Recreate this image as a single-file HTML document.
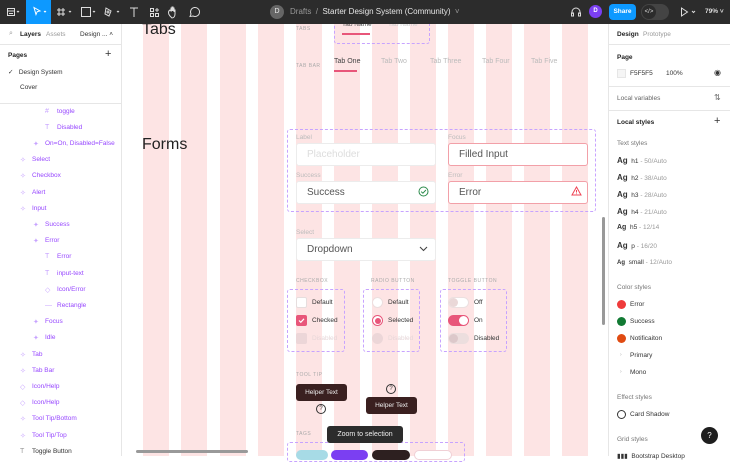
<!DOCTYPE html>
<html><head><meta charset="utf-8"><style>
*{margin:0;padding:0;box-sizing:border-box}
body{width:730px;height:456px;overflow:hidden;font-family:"Liberation Sans",sans-serif;background:#fff;position:relative;font-size:7px;color:#333}
.a{position:absolute}
.top{left:0;top:0;width:730px;height:24px;background:#2c2c2c;color:#ddd}
.stripe{position:absolute;top:24px;height:432px;width:26px;background:#fde4e4}
.lp{left:0;top:24px;width:122px;height:432px;background:#fff;border-right:1px solid #e6e6e6}
.rp{left:608px;top:24px;width:122px;height:432px;background:#fff;border-left:1px solid #e6e6e6}
.ly{position:absolute;color:#9747ff;font-size:6.5px}
.ly i{position:absolute;left:-12px;top:0;font-style:normal;color:#c7a3ff;font-size:7px}
.dash{position:absolute;border:1px dashed #c7a3ff;border-radius:3px}
.inp{position:absolute;border:1px solid #ececec;border-radius:3px;font-size:10px;padding-left:10px;display:flex;align-items:center;color:#555;background:#fff}
.lbl{position:absolute;font-size:6.5px;color:#bbb}
.cap{position:absolute;font-size:5px;color:#aaa;letter-spacing:.5px}
.rt{position:absolute;font-size:6.5px;color:#333}
.sm{color:#999}
.tip{position:absolute;background:#3a2020;color:#eee;border-radius:3px;font-size:6.5px;display:flex;align-items:center;justify-content:center}
</style></head><body>
<div class="stripe" style="left:143px"></div><div class="stripe" style="left:181px"></div><div class="stripe" style="left:220px"></div><div class="stripe" style="left:258px"></div><div class="stripe" style="left:296px"></div><div class="stripe" style="left:334px"></div><div class="stripe" style="left:372px"></div><div class="stripe" style="left:410px"></div><div class="stripe" style="left:448px"></div><div class="stripe" style="left:486px"></div><div class="stripe" style="left:524px"></div><div class="stripe" style="left:562px"></div>

<div class="a" style="left:142px;top:21px;font-size:16px;color:#222">Tabs</div>
<div class="a" style="left:142px;top:136px;font-size:16px;color:#222">Forms</div>
<div class="cap" style="left:296px;top:26px">TABS</div>
<div class="dash" style="left:334px;top:20px;width:96px;height:24px;border-top:none"></div>
<div class="a" style="left:342px;top:21px;font-size:6.5px;color:#555">Tab Name</div>
<div class="a" style="left:388px;top:21px;font-size:6.5px;color:#ccc">Tab Name</div>
<div class="a" style="left:342px;top:33px;width:28px;height:2px;background:#e8567a"></div>
<div class="cap" style="left:296px;top:63px">TAB BAR</div>
<div class="a" style="left:334px;top:58px;font-size:7px;color:#444">Tab One</div>
<div class="a" style="left:381px;top:58px;font-size:7px;color:#bbb">Tab Two</div>
<div class="a" style="left:430px;top:58px;font-size:7px;color:#bbb">Tab Three</div>
<div class="a" style="left:482px;top:58px;font-size:7px;color:#bbb">Tab Four</div>
<div class="a" style="left:531px;top:58px;font-size:7px;color:#bbb">Tab Five</div>
<div class="a" style="left:334px;top:70px;width:23px;height:2px;background:#e8567a"></div>

<div class="dash" style="left:287px;top:129px;width:309px;height:83px"></div>
<div class="lbl" style="left:296px;top:134px">Label</div>
<div class="inp" style="left:296px;top:143px;width:140px;height:23px;color:#ddd">Placeholder</div>
<div class="lbl" style="left:296px;top:172px">Success</div>
<div class="inp" style="left:296px;top:181px;width:140px;height:23px">Success</div>
<svg class="a" style="left:418px;top:186px" width="11" height="11" viewBox="0 0 11 11"><circle cx="5.5" cy="5.5" r="4.5" fill="none" stroke="#2a8a4a" stroke-width="1"/><path d="M3.2 5.6l1.7 1.6 3-3.2" fill="none" stroke="#2a8a4a" stroke-width="1"/></svg>
<div class="lbl" style="left:448px;top:134px">Focus</div>
<div class="inp" style="left:448px;top:143px;width:140px;height:23px;border-color:#f2a0a8">Filled Input</div>
<div class="lbl" style="left:448px;top:172px">Error</div>
<div class="inp" style="left:448px;top:181px;width:140px;height:23px;border-color:#f2a0a8">Error</div>
<svg class="a" style="left:571px;top:186px" width="11" height="10" viewBox="0 0 11 10"><path d="M5.5 1L10 9H1z" fill="none" stroke="#ef4455" stroke-width="1"/><path d="M5.5 4v2.5M5.5 7.5v.6" stroke="#ef4455" stroke-width="1"/></svg>

<div class="lbl" style="left:296px;top:229px">Select</div>
<div class="inp" style="left:296px;top:238px;width:140px;height:23px">Dropdown</div>
<svg class="a" style="left:419px;top:246px" width="9" height="6" viewBox="0 0 9 6"><path d="M1 1l3.5 3.5L8 1" fill="none" stroke="#444" stroke-width="1.1"/></svg>

<div class="cap" style="left:296px;top:278px">CHECKBOX</div>
<div class="cap" style="left:371px;top:278px">RADIO BUTTON</div>
<div class="cap" style="left:448px;top:278px">TOGGLE BUTTON</div>
<div class="dash" style="left:287px;top:289px;width:58px;height:63px"></div>
<div class="dash" style="left:363px;top:289px;width:57px;height:63px"></div>
<div class="dash" style="left:440px;top:289px;width:67px;height:63px"></div>
<div class="a" style="left:296px;top:297px;width:11px;height:11px;border:1px solid #e6dede;border-radius:2px;background:#fff"></div>
<div class="a" style="left:296px;top:315px;width:11px;height:11px;border-radius:2px;background:#e8567a"></div>
<svg class="a" style="left:297px;top:316px" width="9" height="9" viewBox="0 0 9 9"><path d="M2 4.5l1.8 1.8L7 2.8" fill="none" stroke="#fff" stroke-width="1.2"/></svg>
<div class="a" style="left:296px;top:333px;width:11px;height:11px;border-radius:2px;background:#ecd6d8"></div>
<div class="rt" style="left:312px;top:299px">Default</div>
<div class="rt" style="left:312px;top:317px">Checked</div>
<div class="rt" style="left:312px;top:335px;color:#e6d6d8">Disabled</div>
<div class="a" style="left:372px;top:297px;width:11px;height:11px;border:1px solid #ecdede;border-radius:50%;background:#fff"></div>
<div class="a" style="left:372px;top:315px;width:11px;height:11px;border:1px solid #e8567a;border-radius:50%;background:#fff"></div>
<div class="a" style="left:374.5px;top:317.5px;width:6px;height:6px;border-radius:50%;background:#e8567a"></div>
<div class="a" style="left:372px;top:333px;width:11px;height:11px;border-radius:50%;background:#ecd6d8"></div>
<div class="rt" style="left:388px;top:299px">Default</div>
<div class="rt" style="left:388px;top:317px">Selected</div>
<div class="rt" style="left:388px;top:335px;color:#e6d6d8">Disabled</div>
<div class="a" style="left:448px;top:297px;width:21px;height:11px;border:1px solid #ece0e0;border-radius:6px;background:#fff"></div>
<div class="a" style="left:449px;top:298px;width:9px;height:9px;border-radius:50%;background:#ead8d8"></div>
<div class="a" style="left:448px;top:315px;width:21px;height:11px;border-radius:6px;background:#e8567a"></div>
<div class="a" style="left:459px;top:316px;width:9px;height:9px;border-radius:50%;background:#fff"></div>
<div class="a" style="left:448px;top:333px;width:21px;height:11px;border-radius:6px;background:#ecdede"></div>
<div class="a" style="left:449px;top:334px;width:9px;height:9px;border-radius:50%;background:#dcc8ca"></div>
<div class="rt" style="left:474px;top:299px">Off</div>
<div class="rt" style="left:474px;top:317px">On</div>
<div class="rt" style="left:474px;top:335px">Disabled</div>

<div class="cap" style="left:296px;top:372px">TOOL TIP</div>
<div class="tip" style="left:296px;top:384px;width:51px;height:17px">Helper Text</div>
<div class="a" style="left:316px;top:404px;width:10px;height:10px;border:1px solid #333;border-radius:50%;font-size:6px;text-align:center;line-height:8px;color:#333">?</div>
<div class="a" style="left:386px;top:384px;width:10px;height:10px;border:1px solid #333;border-radius:50%;font-size:6px;text-align:center;line-height:8px;color:#333">?</div>
<div class="tip" style="left:366px;top:397px;width:51px;height:17px">Helper Text</div>
<div class="cap" style="left:296px;top:431px">TAGS</div>
<div class="dash" style="left:287px;top:442px;width:178px;height:20px"></div>
<div class="a" style="left:296px;top:450px;width:32px;height:10px;border-radius:5px;background:#a7dbe6"></div>
<div class="a" style="left:331px;top:450px;width:37px;height:10px;border-radius:5px;background:#7b3ff2"></div>
<div class="a" style="left:372px;top:450px;width:38px;height:10px;border-radius:5px;background:#2d2020"></div>
<div class="a" style="left:414px;top:450px;width:38px;height:10px;border-radius:5px;border:1px solid #f0d0d6;background:#fff"></div>
<div class="a" style="left:327px;top:426px;width:76px;height:17px;background:#2c2c2c;color:#eee;border-radius:3px;font-size:7px;display:flex;align-items:center;justify-content:center">Zoom to selection</div>
<div class="a" style="left:136px;top:450px;width:112px;height:3px;background:#999;border-radius:2px"></div>
<div class="a" style="left:602px;top:217px;width:3px;height:108px;background:#999;border-radius:2px"></div>

<div class="a top">
 <div class="a" style="left:26px;top:0;width:25px;height:24px;background:#0d99ff"></div>
 <svg class="a" style="left:0;top:0" width="210" height="24" viewBox="0 0 210 24" fill="none" stroke="#ddd" stroke-width="1">
  <rect x="7.5" y="8.5" width="7" height="7"/><path d="M7.5 11h7M9 13.5h4"/><path d="M17 11l1 1 1-1"/>
  <path d="M34 7.5l6 3.5-2.8.7-1.2 2.8z" stroke="#fff"/><path d="M44 11l1 1 1-1" stroke="#fff"/>
  <path d="M59 8v8M63 8v8M57 10h8M57 14h8"/><path d="M69 11l1 1 1-1"/>
  <rect x="81.5" y="7.5" width="9" height="9"/><path d="M93 11l1 1 1-1"/>
  <path d="M106 8l5 3-2 5-4-2z"/><circle cx="108" cy="12" r="1"/><path d="M117 11l1 1 1-1"/>
  <path d="M130 8h8M134 8v9"/>
  <rect x="150.5" y="8.5" width="3" height="3"/><rect x="150.5" y="13.5" width="3" height="3"/><rect x="155.5" y="13.5" width="3" height="3"/><path d="M157 8v4M155 10h4"/>
  <path d="M170 16c-2-2-2-5 0-6l1 1V8h1v3-4h1v4-3h1v4-2h1v4c0 2-1 4-3 4z"/>
  <path d="M190 16.5l1-2.5a4.5 4.5 0 1 1 2 2z"/>
 </svg>
 <div class="a" style="left:270px;top:5px;width:14px;height:14px;border-radius:50%;background:#666;color:#eee;font-size:7px;text-align:center;line-height:14px">D</div>
 <div class="a" style="left:290px;top:7px;font-size:8px;color:#999">Drafts&nbsp;&nbsp;/&nbsp;&nbsp;<span style="color:#e6e6e6">Starter Design System (Community)</span>&nbsp;&nbsp;˅</div>
 <svg class="a" style="left:570px;top:6px" width="12" height="12" viewBox="0 0 12 12" fill="none" stroke="#ddd" stroke-width="1"><path d="M2 8V6a4 4 0 0 1 8 0v2"/><rect x="1.5" y="7" width="2" height="3"/><rect x="8.5" y="7" width="2" height="3"/></svg>
 <div class="a" style="left:589px;top:5px;width:13px;height:13px;border-radius:50%;background:#7b3ff2;color:#fff;font-size:6px;text-align:center;line-height:13px;font-weight:bold">D</div>
 <div class="a" style="left:609px;top:4px;width:27px;height:16px;border-radius:4px;background:#0d99ff;color:#fff;font-size:6.5px;font-weight:bold;text-align:center;line-height:16px">Share</div>
 <div class="a" style="left:641px;top:4px;width:28px;height:16px;border-radius:8px;background:#444"></div>
 <div class="a" style="left:642px;top:5px;width:14px;height:14px;border-radius:50%;background:#2c2c2c;color:#ddd;font-size:6px;text-align:center;line-height:14px">&lt;/&gt;</div>
 <svg class="a" style="left:680px;top:7px" width="20" height="10" viewBox="0 0 20 10" fill="none" stroke="#ddd" stroke-width="1"><path d="M1.5 1v8l6-4z"/><path d="M12 4l1.5 1.5L15 4"/></svg>
 <div class="a" style="left:705px;top:8px;font-size:6.5px;color:#ddd;font-weight:bold">79% ˅</div>
</div>

<div class="a lp">
 <div class="a" style="left:9px;top:6px;font-size:7px;color:#999">⌕</div>
 <div class="a" style="left:20px;top:7px;font-size:6.5px;font-weight:bold;color:#222">Layers</div>
 <div class="a" style="left:46px;top:7px;font-size:6.5px;color:#999">Assets</div>
 <div class="a" style="left:80px;top:7px;font-size:6.5px;color:#333">Design ... ˄</div>
 <div class="a" style="left:0;top:20px;width:121px;height:1px;background:#e6e6e6"></div>
 <div class="a" style="left:8px;top:28px;font-size:6.5px;font-weight:bold;color:#222">Pages</div>
 <div class="a" style="left:105px;top:24px;font-size:11px;color:#333">+</div>
 <div class="a" style="left:8px;top:44px;font-size:6.5px;color:#333">✓&nbsp;&nbsp;&nbsp;Design System</div>
 <div class="a" style="left:20px;top:60px;font-size:6.5px;color:#333">Cover</div>
 <div class="a" style="left:0;top:79px;width:121px;height:1px;background:#e6e6e6"></div>
 <div class="ly" style="left:57px;top:84px"><i>#</i>toggle</div>
 <div class="ly" style="left:57px;top:100px"><i>T</i>Disabled</div>
 <div class="ly" style="left:45px;top:116px"><i>✦</i>On=On, Disabled=False</div>
 <div class="ly" style="left:32px;top:132px"><i>✧</i>Select</div>
 <div class="ly" style="left:32px;top:148px"><i>✧</i>Checkbox</div>
 <div class="ly" style="left:32px;top:165px"><i>✧</i>Alert</div>
 <div class="ly" style="left:32px;top:181px"><i>✧</i>Input</div>
 <div class="ly" style="left:45px;top:197px"><i>✦</i>Success</div>
 <div class="ly" style="left:45px;top:213px"><i>✦</i>Error</div>
 <div class="ly" style="left:57px;top:229px"><i>T</i>Error</div>
 <div class="ly" style="left:57px;top:246px"><i>T</i>input-text</div>
 <div class="ly" style="left:57px;top:262px"><i>◇</i>Icon/Error</div>
 <div class="ly" style="left:57px;top:278px"><i>—</i>Rectangle</div>
 <div class="ly" style="left:45px;top:294px"><i>✦</i>Focus</div>
 <div class="ly" style="left:45px;top:310px"><i>✦</i>Idle</div>
 <div class="ly" style="left:32px;top:327px"><i>✧</i>Tab</div>
 <div class="ly" style="left:32px;top:343px"><i>✧</i>Tab Bar</div>
 <div class="ly" style="left:32px;top:359px"><i>◇</i>Icon/Help</div>
 <div class="ly" style="left:32px;top:375px"><i>◇</i>Icon/Help</div>
 <div class="ly" style="left:32px;top:391px"><i>✧</i>Tool Tip/Bottom</div>
 <div class="ly" style="left:32px;top:408px"><i>✧</i>Tool Tip/Top</div>
 <div class="ly" style="left:32px;top:424px;color:#333"><i style="color:#999">T</i>Toggle Button</div>
</div>

<div class="a rp">
 <div class="a" style="left:8px;top:7px;font-size:6.5px;font-weight:bold;color:#222">Design</div>
 <div class="a" style="left:34px;top:7px;font-size:6.5px;color:#999">Prototype</div>
 <div class="a" style="left:0;top:20px;width:122px;height:1px;background:#e6e6e6"></div>
 <div class="a" style="left:8px;top:30px;font-size:6.5px;font-weight:bold;color:#222">Page</div>
 <div class="a" style="left:8px;top:45px;width:9px;height:9px;background:#f5f5f5;border:1px solid #e6e6e6"></div>
 <div class="a" style="left:21px;top:46px;font-size:6.5px;color:#333">F5F5F5</div>
 <div class="a" style="left:57px;top:46px;font-size:6.5px;color:#333">100%</div>
 <div class="a" style="left:105px;top:44px;font-size:8px;color:#333">◉</div>
 <div class="a" style="left:0;top:62px;width:122px;height:1px;background:#e6e6e6"></div>
 <div class="a" style="left:8px;top:71px;font-size:6.5px;color:#666">Local variables</div>
 <div class="a" style="left:105px;top:69px;font-size:8px;color:#666">⇅</div>
 <div class="a" style="left:0;top:86px;width:122px;height:1px;background:#e6e6e6"></div>
 <div class="a" style="left:8px;top:95px;font-size:6.5px;font-weight:bold;color:#222">Local styles</div>
 <div class="a" style="left:105px;top:91px;font-size:11px;color:#333">+</div>
 <div class="a" style="left:8px;top:116px;font-size:6.5px;color:#777">Text styles</div>
 <div class="a" style="left:8px;top:132px;font-size:6.5px;color:#333"><b style="font-size:8px">Ag</b>&nbsp; h1 <span class="sm">- 50/Auto</span></div>
 <div class="a" style="left:8px;top:149px;font-size:6.5px;color:#333"><b style="font-size:8px">Ag</b>&nbsp; h2 <span class="sm">- 38/Auto</span></div>
 <div class="a" style="left:8px;top:166px;font-size:6.5px;color:#333"><b style="font-size:8px">Ag</b>&nbsp; h3 <span class="sm">- 28/Auto</span></div>
 <div class="a" style="left:8px;top:183px;font-size:6.5px;color:#333"><b style="font-size:8px">Ag</b>&nbsp; h4 <span class="sm">- 21/Auto</span></div>
 <div class="a" style="left:8px;top:200px;font-size:6.5px;color:#333"><b style="font-size:7px">Ag</b>&nbsp; h5 <span class="sm">- 12/14</span></div>
 <div class="a" style="left:8px;top:217px;font-size:6.5px;color:#333"><b style="font-size:8px">Ag</b>&nbsp; p <span class="sm">- 16/20</span></div>
 <div class="a" style="left:8px;top:235px;font-size:6.5px;color:#333"><b style="font-size:6px">Ag</b>&nbsp; small <span class="sm">- 12/Auto</span></div>
 <div class="a" style="left:8px;top:260px;font-size:6.5px;color:#777">Color styles</div>
 <div class="a" style="left:8px;top:276px;width:9px;height:9px;border-radius:50%;background:#ef3b3b"></div><div class="rt" style="left:21px;top:277px">Error</div>
 <div class="a" style="left:8px;top:293px;width:9px;height:9px;border-radius:50%;background:#127a34"></div><div class="rt" style="left:21px;top:294px">Success</div>
 <div class="a" style="left:8px;top:310px;width:9px;height:9px;border-radius:50%;background:#e04b12"></div><div class="rt" style="left:21px;top:311px">Notificaiton</div>
 <div class="rt" style="left:11px;top:328px;color:#aaa;font-size:5px">›</div><div class="rt" style="left:21px;top:328px">Primary</div>
 <div class="rt" style="left:11px;top:345px;color:#aaa;font-size:5px">›</div><div class="rt" style="left:21px;top:345px">Mono</div>
 <div class="a" style="left:8px;top:370px;font-size:6.5px;color:#777">Effect styles</div>
 <div class="a" style="left:8px;top:386px;width:9px;height:9px;border-radius:50%;border:1px solid #333"></div><div class="rt" style="left:21px;top:387px">Card Shadow</div>
 <div class="a" style="left:8px;top:412px;font-size:6.5px;color:#777">Grid styles</div>
 <div class="a" style="left:8px;top:428px;font-size:6.5px;color:#333">▮▮▮&nbsp; Bootstrap Desktop</div>
 <div class="a" style="left:92px;top:403px;width:17px;height:17px;border-radius:50%;background:#1e1e1e;color:#fff;font-size:8px;text-align:center;line-height:17px">?</div>
</div>
</body></html>
